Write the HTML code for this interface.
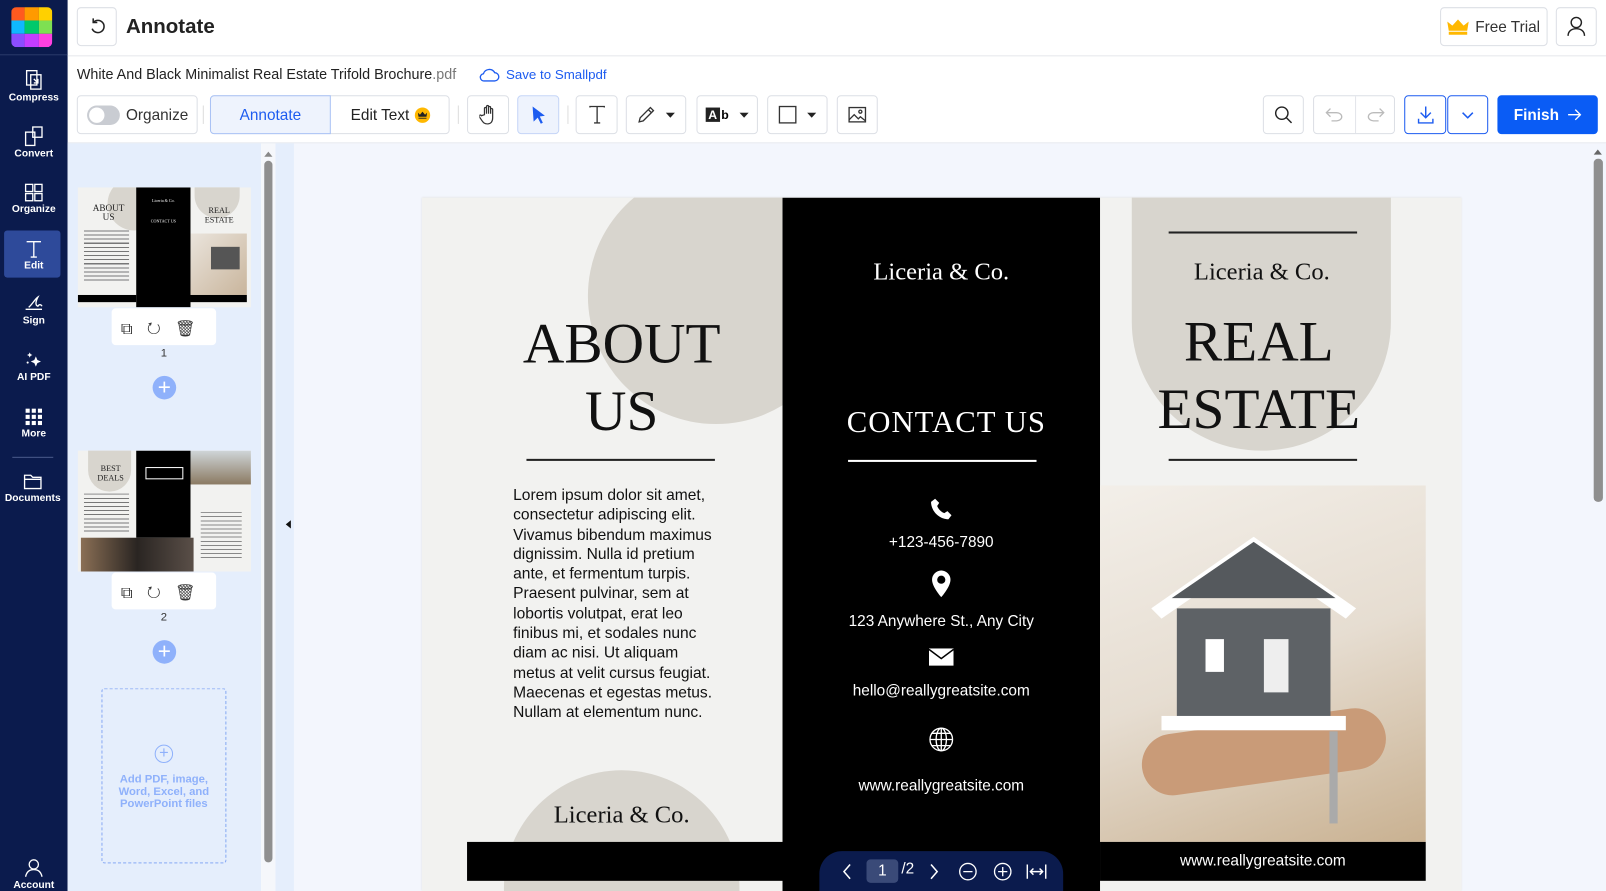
<!DOCTYPE html>
<html><head><meta charset="utf-8"><style>
*{box-sizing:border-box;margin:0;padding:0}
html,body{width:1606px;height:891px;overflow:hidden}
body{background:#fff;font-family:"Liberation Sans",sans-serif;position:relative}
#w{position:absolute;left:0;top:0;width:1568px;height:870px;transform:scale(1.02423);transform-origin:0 0;overflow:hidden}
.a{position:absolute}
.sb{left:0;top:0;width:66px;height:870px;background:#0b1b4d}
.si{position:absolute;left:0;width:62px;text-align:center;color:#fff;font-size:10px;font-weight:bold}
.si svg{display:block;margin:0 auto 2px}
.btn{position:absolute;border:1px solid #dcdfe5;border-radius:4px;background:#fff;display:flex;align-items:center;justify-content:center}
.serif{font-family:"Liberation Serif",serif}
.c{text-align:center}
</style></head><body><div id="w">
<div class="a sb"></div>
<div class="a" style="left:11px;top:7px;width:40px;height:39px;border-radius:5px;overflow:hidden;display:grid;grid-template-columns:1fr 1fr 1fr">
<i style="background:#ff5a1f"></i><i style="background:#ff9a00"></i><i style="background:#ffd000"></i><i style="background:#10b8ff"></i><i style="background:#00c96b"></i><i style="background:#7ee052"></i><i style="background:#8b4dff"></i><i style="background:#c43dff"></i><i style="background:#ff40e0"></i></div>
<div class="a" style="left:0;top:53px;width:66px;height:1px;background:#2a3a6a"></div>
<div class="si" style="top:68px;left:2px"><svg width="18" height="20" viewBox="0 0 18 20" fill="none" stroke="#fff" stroke-width="1.3"><rect x="2" y="1" width="10" height="14"/><rect x="6" y="5" width="10" height="14"/><path d="M9 9l4 4M9 13h4v-4"/></svg>Compress</div>
<div class="si" style="top:123px;left:2px"><svg width="18" height="20" viewBox="0 0 18 20" fill="none" stroke="#fff" stroke-width="1.3"><rect x="1" y="6" width="9" height="13"/><rect x="8" y="1" width="9" height="10"/></svg>Convert</div>
<div class="si" style="top:179px;left:2px"><svg width="18" height="18" viewBox="0 0 18 18" fill="none" stroke="#fff" stroke-width="1.3"><rect x="1" y="1" width="7" height="7"/><rect x="10" y="1" width="7" height="7"/><rect x="1" y="10" width="7" height="7"/><rect x="10" y="10" width="7" height="7"/></svg>Organize</div>
<div class="a" style="left:4px;top:225px;width:55px;height:46px;background:#2e4a9a;border-radius:3px"></div>
<div class="si" style="top:234px;left:2px"><svg width="18" height="18" viewBox="0 0 18 18" fill="none" stroke="#fff" stroke-width="1.3"><path d="M2 2h14M9 2v15M6 17h6"/></svg>Edit</div>
<div class="si" style="top:288px;left:2px"><svg width="20" height="18" viewBox="0 0 20 18" fill="none" stroke="#fff" stroke-width="1.3"><path d="M2 14h16M5 12c3-2 6-8 9-10-2 4-3 8 0 9 1-2 3-2 4 0"/></svg>Sign</div>
<div class="si" style="top:343px;left:2px"><svg width="18" height="18" viewBox="0 0 18 18" fill="#fff"><path d="M11 5l1.5 3.5L16 10l-3.5 1.5L11 15l-1.5-3.5L6 10l3.5-1.5z"/><path d="M5 1l.8 1.8L7.6 3.6 5.8 4.4 5 6.2 4.2 4.4 2.4 3.6 4.2 2.8z"/><circle cx="3" cy="11" r="1"/></svg>AI PDF</div>
<div class="si" style="top:398px;left:2px"><svg width="18" height="18" viewBox="0 0 18 18" fill="#fff"><rect x="1" y="1" width="4" height="4"/><rect x="7" y="1" width="4" height="4"/><rect x="13" y="1" width="4" height="4"/><rect x="1" y="7" width="4" height="4"/><rect x="7" y="7" width="4" height="4"/><rect x="13" y="7" width="4" height="4"/><rect x="1" y="13" width="4" height="4"/><rect x="7" y="13" width="4" height="4"/><rect x="13" y="13" width="4" height="4"/></svg>More</div>
<div class="a" style="left:12px;top:446px;width:40px;height:1px;background:#4a5a8a"></div>
<div class="si" style="top:461px;left:0;width:64px"><svg width="20" height="18" viewBox="0 0 20 18" fill="none" stroke="#fff" stroke-width="1.3"><path d="M2 3h6l2 2h8v11H2z M2 7h16"/></svg>Documents</div>
<div class="si" style="top:838px;left:2px"><svg width="18" height="19" viewBox="0 0 18 19" fill="none" stroke="#fff" stroke-width="1.3"><circle cx="9" cy="6" r="4.5"/><path d="M1 18c1-5 4-7 8-7s7 2 8 7"/></svg>Account</div>
<div class="a" style="left:66px;top:54px;width:1502px;height:1px;background:#e6e8ec"></div>
<div class="btn" style="left:75px;top:7px;width:39px;height:38px"><svg width="18" height="18" viewBox="0 0 18 18" fill="none" stroke="#222" stroke-width="1.5"><path d="M5 5a6 6 0 1 1-1 6"/><path d="M5 1v4h4" /></svg></div>
<div class="a" style="left:123px;top:15px;font-size:20px;font-weight:bold;color:#222">Annotate</div>
<div class="btn" style="left:1406px;top:7px;width:105px;height:38px;font-size:15px;color:#333;gap:6px"><svg width="21" height="15" viewBox="0 0 21 15" fill="#ffb800"><path d="M0 2l5 4 5.5-6 5.5 6 5-4-1.5 9H1.5z"/><rect x="1.5" y="12" width="18" height="3"/></svg>Free Trial</div>
<div class="btn" style="left:1519px;top:7px;width:40px;height:38px"><svg width="18" height="20" viewBox="0 0 18 20" fill="none" stroke="#222" stroke-width="1.4"><circle cx="9" cy="6" r="5"/><path d="M1 19c0-5 4-7 8-7s8 2 8 7"/></svg></div>
<div class="a" style="left:75px;top:64px;font-size:14px;color:#222">White And Black Minimalist Real Estate Trifold Brochure<span style="color:#777">.pdf</span></div>
<div class="a" style="left:468px;top:65px;font-size:13px;color:#1d5cf0;display:flex;gap:6px;align-items:center"><svg width="20" height="14" viewBox="0 0 20 14" fill="none" stroke="#1d5cf0" stroke-width="1.3"><path d="M5 13h10a4 4 0 0 0 0-8 6 6 0 0 0-11 1 3.5 3.5 0 0 0 1 7z"/></svg>Save to Smallpdf</div>
<div class="btn" style="left:75px;top:93px;width:118px;height:38px;font-size:15px;color:#333;justify-content:flex-start;padding-left:9px;gap:6px"><span style="width:32px;height:19px;border-radius:10px;background:#c9ccd2;position:relative;display:inline-block"><i style="position:absolute;left:2px;top:2px;width:15px;height:15px;border-radius:50%;background:#fff"></i></span>Organize</div>
<div class="a" style="left:198px;top:103px;width:1px;height:18px;background:#ddd"></div>
<div class="btn" style="left:205px;top:93px;width:234px;height:38px"></div>
<div class="a" style="left:205px;top:93px;width:118px;height:38px;background:#eef3fd;border:1px solid #a9c2f5;border-radius:4px 0 0 4px;color:#1d5cf0;font-size:15px;display:flex;align-items:center;justify-content:center">Annotate</div>
<div class="a" style="left:323px;top:93px;width:116px;height:38px;font-size:15px;color:#222;display:flex;align-items:center;justify-content:center;gap:5px">Edit Text <span style="width:15px;height:15px;border-radius:50%;background:#ffb800;display:inline-flex;align-items:center;justify-content:center"><svg width="9" height="7" viewBox="0 0 9 7" fill="#222"><path d="M0 1l2 2 2.5-3 2.5 3 2-2-.6 4H.6z"/><rect x=".6" y="6" width="7.8" height="1"/></svg></span></div>
<div class="a" style="left:447px;top:103px;width:1px;height:18px;background:#ddd"></div>
<div class="btn" style="left:456px;top:93px;width:41px;height:38px"><svg width="18" height="20" viewBox="0 0 18 20" fill="none" stroke="#333" stroke-width="1.2"><path d="M5 10V4a1 1 0 0 1 2 0v5V2a1 1 0 0 1 2 0v7V3a1 1 0 0 1 2 0v6V5a1 1 0 0 1 2 0v8c0 4-2 6-5 6s-4-1-6-4l-2-3a1 1 0 0 1 2-1z"/></svg></div>
<div class="btn" style="left:505px;top:93px;width:41px;height:38px;background:#eef3fd;border-color:#c5d5f7"><svg width="14" height="18" viewBox="0 0 14 18" fill="#1d5cf0"><path d="M1 1l12 9-5 .8 3 6-2 1-3-6-4 4z"/></svg></div>
<div class="a" style="left:554px;top:103px;width:1px;height:18px;background:#ddd"></div>
<div class="btn" style="left:562px;top:93px;width:41px;height:38px"><svg width="16" height="18" viewBox="0 0 16 18" fill="none" stroke="#333" stroke-width="1.3"><path d="M1 2V1h14v1M8 1v16M5 17h6"/></svg></div>
<div class="btn" style="left:611px;top:93px;width:59px;height:38px;gap:10px"><svg width="18" height="18" viewBox="0 0 18 18" fill="none" stroke="#333" stroke-width="1.3"><path d="M2 16l1-4L13 2l3 3L6 15z M11 4l3 3"/></svg><svg width="9" height="5" viewBox="0 0 9 5"><path d="M0 0h9L4.5 5z" fill="#222"/></svg></div>
<div class="btn" style="left:680px;top:93px;width:60px;height:38px;gap:10px"><span style="font-size:12px;font-weight:bold;display:inline-flex"><span style="background:#222;color:#fff;padding:0 2px">A</span><span style="border-left:1.5px solid #222;padding-left:1px">b</span></span><svg width="9" height="5" viewBox="0 0 9 5"><path d="M0 0h9L4.5 5z" fill="#222"/></svg></div>
<div class="btn" style="left:749px;top:93px;width:59px;height:38px;gap:10px"><svg width="18" height="18"><rect x="1" y="1" width="16" height="16" fill="none" stroke="#333" stroke-width="1.3"/></svg><svg width="9" height="5" viewBox="0 0 9 5"><path d="M0 0h9L4.5 5z" fill="#222"/></svg></div>
<div class="btn" style="left:817px;top:93px;width:40px;height:38px"><svg width="18" height="16" viewBox="0 0 18 16" fill="none" stroke="#333" stroke-width="1.3"><rect x="1" y="1" width="16" height="14"/><path d="M1 13l5-5 4 4 2-2 5 4"/><circle cx="12" cy="5" r="1.5"/></svg></div>
<div class="btn" style="left:1233px;top:93px;width:40px;height:38px"><svg width="18" height="18" viewBox="0 0 18 18" fill="none" stroke="#222" stroke-width="1.4"><circle cx="7.5" cy="7.5" r="6"/><path d="M12 12l5 5"/></svg></div>
<div class="btn" style="left:1282px;top:93px;width:80px;height:38px"><i style="position:absolute;left:40px;top:0;width:1px;height:36px;background:#e3e5ea"></i><svg style="position:absolute;left:11px" width="18" height="14" viewBox="0 0 18 14" fill="none" stroke="#bbb" stroke-width="1.3"><path d="M5 1L1 5l4 4M1 5h10a5 4 0 0 1 0 8H6"/></svg><svg style="position:absolute;left:51px" width="18" height="14" viewBox="0 0 18 14" fill="none" stroke="#bbb" stroke-width="1.3"><path d="M13 1l4 4-4 4M17 5H7a5 4 0 0 0 0 8h5"/></svg></div>
<div class="btn" style="left:1371px;top:93px;width:41px;height:38px;border-color:#1d5cf0"><svg width="16" height="18" viewBox="0 0 16 18" fill="none" stroke="#1d5cf0" stroke-width="1.4"><path d="M8 1v11M3 7l5 5 5-5M1 13v4h14v-4"/></svg></div>
<div class="btn" style="left:1413px;top:93px;width:40px;height:38px;border-color:#1d5cf0"><svg width="12" height="7" viewBox="0 0 12 7" fill="none" stroke="#1d5cf0" stroke-width="1.5"><path d="M1 1l5 5 5-5"/></svg></div>
<div class="a" style="left:1462px;top:93px;width:98px;height:38px;background:#0a5cf5;border-radius:4px;color:#fff;font-size:15px;font-weight:bold;display:flex;align-items:center;justify-content:center;gap:8px">Finish <svg width="14" height="12" viewBox="0 0 14 12" fill="none" stroke="#fff" stroke-width="1.3"><path d="M1 6h12M8 1l5 5-5 5"/></svg></div>
<div class="a" style="left:66px;top:139px;width:1502px;height:1px;background:#e3e7ee"></div>
<div class="a" style="left:66px;top:140px;width:189px;height:730px;background:#e5eefc"></div>
<div class="a" style="left:255px;top:140px;width:14px;height:730px;background:#f5f7fb"></div>
<div class="a" style="left:258px;top:157px;width:8px;height:685px;background:#8f8f8f;border-radius:4px"></div>
<div class="a" style="left:258px;top:144px;width:0;height:0;border:4px solid transparent;border-bottom:5px solid #888"></div>
<div class="a" style="left:269px;top:140px;width:18px;height:730px;background:#e5eefc"></div>
<div class="a" style="left:275px;top:508px;width:0;height:0;border:4px solid transparent;border-right:5px solid #111"></div>
<div class="a" style="left:287px;top:140px;width:1281px;height:730px;background:#f3f6fd"></div>
<div class="a" style="left:76px;top:183px;width:169px;height:117px;background:#f2f2f0;overflow:hidden">
<div class="a" style="left:29px;top:-10px;width:52px;height:52px;border-radius:50%;background:#d8d5ce"></div>
<div class="a serif c" style="left:0;top:16px;width:60px;font-size:9px;line-height:9px;color:#222">ABOUT<br>US</div>
<div class="a" style="left:57px;top:0;width:53px;height:117px;background:#000"></div>
<div class="a serif c" style="left:57px;top:10px;width:53px;font-size:4px;color:#fff">Liceria &amp; Co.<br><br><br><br>CONTACT US</div>
<div class="a" style="left:114px;top:-20px;width:44px;height:50px;border-radius:0 0 22px 22px;background:#d8d5ce"></div>
<div class="a serif c" style="left:110px;top:18px;width:56px;font-size:8px;line-height:9px;color:#222">REAL<br>ESTATE</div>
<div class="a" style="left:110px;top:45px;width:55px;height:60px;background:linear-gradient(135deg,#eae4dc,#c9b59c)"></div>
<div class="a" style="left:130px;top:58px;width:28px;height:22px;background:#555"></div>
<div class="a" style="left:6px;top:42px;width:44px;height:50px;background:repeating-linear-gradient(#777 0 1px,transparent 1px 4px)"></div>
<div class="a" style="left:0;top:105px;width:57px;height:7px;background:#000"></div>
<div class="a" style="left:110px;top:105px;width:55px;height:7px;background:#000"></div>
</div>
<div class="a" style="left:109px;top:301px;width:102px;height:36px;background:#fff;border-radius:4px"></div>
<div class="a" style="left:118px;top:311px;font-size:16px;color:#333;letter-spacing:14px">⧉↻🗑</div>
<div class="a c" style="left:150px;top:339px;width:20px;font-size:11px;color:#333">1</div>
<div class="a" style="left:149px;top:367px;width:23px;height:23px;border-radius:50%;background:#8fb1fb;color:#fff;font-size:22px;line-height:22px;text-align:center">+</div>
<div class="a" style="left:76px;top:440px;width:169px;height:118px;background:#f2f2f0;overflow:hidden">
<div class="a" style="left:10px;top:-10px;width:42px;height:50px;border-radius:0 0 21px 21px;background:#d8d5ce"></div>
<div class="a serif c" style="left:2px;top:13px;width:60px;font-size:8px;line-height:9px;color:#222">BEST<br>DEALS</div>
<div class="a" style="left:57px;top:0;width:53px;height:85px;background:#000"></div>
<div class="a" style="left:66px;top:16px;width:37px;height:12px;border:1px solid #fff"></div>
<div class="a" style="left:110px;top:0;width:59px;height:33px;background:linear-gradient(#cfd5d8,#8b7a62)"></div>
<div class="a" style="left:3px;top:85px;width:110px;height:33px;background:linear-gradient(90deg,#8a6f55,#2a2522,#5a4f48)"></div>
<div class="a" style="left:6px;top:42px;width:44px;height:38px;background:repeating-linear-gradient(#777 0 1px,transparent 1px 4px)"></div>
<div class="a" style="left:120px;top:60px;width:40px;height:45px;background:repeating-linear-gradient(#888 0 1px,transparent 1px 4px)"></div>
</div>
<div class="a" style="left:109px;top:559px;width:102px;height:36px;background:#fff;border-radius:4px"></div>
<div class="a" style="left:118px;top:569px;font-size:16px;color:#333;letter-spacing:14px">⧉↻🗑</div>
<div class="a c" style="left:150px;top:597px;width:20px;font-size:11px;color:#333">2</div>
<div class="a" style="left:149px;top:625px;width:23px;height:23px;border-radius:50%;background:#8fb1fb;color:#fff;font-size:22px;line-height:22px;text-align:center">+</div>
<div class="a" style="left:99px;top:672px;width:122px;height:171px;border:1px dashed #7fa3f3;border-radius:3px"></div>
<div class="a" style="left:151px;top:727px;width:18px;height:18px;border:1.3px solid #8fb1fb;border-radius:50%;color:#8fb1fb;font-size:16px;line-height:15px;text-align:center">+</div>
<div class="a c" style="left:100px;top:755px;width:120px;font-size:11px;line-height:12px;font-weight:bold;color:#8fb1fb">Add PDF, image,<br>Word, Excel, and<br>PowerPoint files</div>
<div class="a" style="left:1556px;top:155px;width:9px;height:335px;background:#8f8f8f;border-radius:4px"></div>
<div class="a" style="left:1556px;top:142px;border:4px solid transparent;border-bottom:5px solid #666"></div>
<div class="a" style="left:412px;top:193px;width:1015px;height:677px;background:#f2f2f0;overflow:hidden;box-shadow:0 0 2px #ddd">
 <div class="a" style="left:0;top:0;width:352px;height:677px;overflow:hidden">
  <div class="a" style="left:162px;top:-29px;width:250px;height:250px;border-radius:50%;background:#d8d5ce"></div>
  <div class="a" style="left:80px;top:559px;width:230px;height:230px;border-radius:50%;background:#d8d5ce"></div>
 </div>
 <div class="a serif c" style="left:40px;top:110px;width:310px;font-size:56px;line-height:66px;color:#111">ABOUT<br>US</div>
 <div class="a" style="left:102px;top:255px;width:184px;height:1.5px;background:#222"></div>
 <div class="a" style="left:89px;top:281px;width:240px;font-size:15.2px;line-height:19.3px;color:#111;white-space:nowrap">Lorem ipsum dolor sit amet,<br>consectetur adipiscing elit.<br>Vivamus bibendum maximus<br>dignissim. Nulla id pretium<br>ante, et fermentum turpis.<br>Praesent pulvinar, sem at<br>lobortis volutpat, erat leo<br>finibus mi, et sodales nunc<br>diam ac nisi. Ut aliquam<br>metus at velit cursus feugiat.<br>Maecenas et egestas metus.<br>Nullam at elementum nunc.</div>
 <div class="a serif c" style="left:40px;top:590px;width:310px;font-size:24px;color:#111">Liceria &amp; Co.</div>
 <div class="a" style="left:44px;top:629px;width:310px;height:38px;background:#000"></div>
 <div class="a" style="left:352px;top:0;width:310px;height:677px;background:#000"></div>
 <div class="a serif c" style="left:352px;top:60px;width:310px;font-size:24px;color:#fff">Liceria &amp; Co.</div>
 <div class="a serif c" style="left:357px;top:203px;width:310px;font-size:30px;color:#fff;letter-spacing:1px">CONTACT US</div>
 <div class="a" style="left:416px;top:256px;width:184px;height:1.5px;background:#fff"></div>
 <svg class="a" style="left:495px;top:292px" width="24" height="24" viewBox="0 0 24 24" fill="#fff"><path d="M6 2l4 4-2 3c1 3 4 6 7 7l3-2 4 4-3 4C10 22 2 14 2 5z"/></svg>
 <div class="a c" style="left:352px;top:328px;width:310px;font-size:15px;color:#fff">+123-456-7890</div>
 <svg class="a" style="left:497px;top:364px" width="20" height="26" viewBox="0 0 20 26" fill="#fff"><path d="M10 0a9 9 0 0 0-9 9c0 7 9 17 9 17s9-10 9-17a9 9 0 0 0-9-9zm0 5a4 4 0 1 1 0 8 4 4 0 0 1 0-8z"/></svg>
 <div class="a c" style="left:352px;top:405px;width:310px;font-size:15px;color:#fff">123 Anywhere St., Any City</div>
 <svg class="a" style="left:495px;top:440px" width="24" height="17" viewBox="0 0 24 17" fill="#fff"><path d="M0 0h24v17H0z"/><path d="M0 1l12 9 12-9" stroke="#000" stroke-width="1.5" fill="none"/></svg>
 <div class="a c" style="left:352px;top:473px;width:310px;font-size:15px;color:#fff">hello@reallygreatsite.com</div>
 <svg class="a" style="left:495px;top:517px" width="24" height="24" viewBox="0 0 24 24" fill="none" stroke="#fff" stroke-width="1.3"><circle cx="12" cy="12" r="11"/><ellipse cx="12" cy="12" rx="5" ry="11"/><path d="M1 12h22M3 6h18M3 18h18M12 1v22"/></svg>
 <div class="a c" style="left:352px;top:566px;width:310px;font-size:15px;color:#fff">www.reallygreatsite.com</div>
 <div class="a" style="left:693px;top:-60px;width:253px;height:307px;border-radius:0 0 126px 126px;background:#d8d5ce"></div>
 <div class="a" style="left:729px;top:33px;width:184px;height:1.5px;background:#222"></div>
 <div class="a serif c" style="left:665px;top:60px;width:310px;font-size:24px;color:#111">Liceria &amp; Co.</div>
 <div class="a serif c" style="left:662px;top:108px;width:310px;font-size:56px;line-height:66px;color:#111">REAL<br>ESTATE</div>
 <div class="a" style="left:729px;top:255px;width:184px;height:1.5px;background:#222"></div>
 <div class="a" style="left:662px;top:281px;width:318px;height:348px;background:linear-gradient(160deg,#f3efe9 0%,#e6ddd1 50%,#c9b191 100%);overflow:hidden">
  <div class="a" style="left:40px;top:230px;width:240px;height:60px;border-radius:40px;background:#c99b78;transform:rotate(-8deg)"></div>
  <div class="a" style="left:75px;top:120px;width:150px;height:110px;background:#5e6266"></div>
  <svg class="a" style="left:50px;top:50px" width="200" height="110" viewBox="0 0 200 110"><path d="M0 70L100 0l100 70-10 10-90-62-90 62z" fill="#fff"/><path d="M20 60L100 5l80 55z" fill="#55595d"/></svg>
  <div class="a" style="left:103px;top:150px;width:18px;height:32px;background:#fff"></div>
  <div class="a" style="left:160px;top:150px;width:24px;height:52px;background:#eee"></div>
  <div class="a" style="left:60px;top:225px;width:180px;height:14px;background:#fff"></div>
  <div class="a" style="left:224px;top:240px;width:8px;height:90px;background:#aaa"></div>
 </div>
 <div class="a" style="left:662px;top:629px;width:318px;height:38px;background:#000"></div>
 <div class="a c" style="left:662px;top:639px;width:318px;font-size:15px;color:#fff">www.reallygreatsite.com</div>
</div>
<div class="a" style="left:800px;top:831px;width:238px;height:39px;border-radius:22px 22px 0 0;background:#0b1b4d"></div>
<svg class="a" style="left:822px;top:843px" width="10" height="16" viewBox="0 0 10 16" fill="none" stroke="#fff" stroke-width="1.5"><path d="M8 1L2 8l6 7"/></svg>
<div class="a" style="left:846px;top:839px;width:31px;height:23px;border-radius:4px;background:#3a4a78;color:#fff;font-size:15px;text-align:center;line-height:23px">1</div>
<div class="a" style="left:880px;top:840px;color:#fff;font-size:15px">/2</div>
<svg class="a" style="left:907px;top:843px" width="10" height="16" viewBox="0 0 10 16" fill="none" stroke="#fff" stroke-width="1.5"><path d="M2 1l6 7-6 7"/></svg>
<svg class="a" style="left:936px;top:842px" width="18" height="18" viewBox="0 0 18 18" fill="none" stroke="#fff" stroke-width="1.3"><circle cx="9" cy="9" r="8"/><path d="M4.5 9h9"/></svg>
<svg class="a" style="left:970px;top:842px" width="18" height="18" viewBox="0 0 18 18" fill="none" stroke="#fff" stroke-width="1.3"><circle cx="9" cy="9" r="8"/><path d="M4.5 9h9M9 4.5v9"/></svg>
<svg class="a" style="left:1002px;top:843px" width="20" height="16" viewBox="0 0 20 16" fill="none" stroke="#fff" stroke-width="1.4"><path d="M1 1v14M19 1v14M4 8h12M7 5L4 8l3 3M13 5l3 3-3 3"/></svg>
</div></body></html>
